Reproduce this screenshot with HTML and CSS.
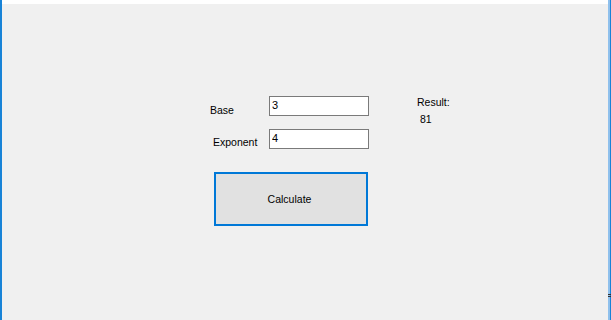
FILE: index.html
```html
<!DOCTYPE html>
<html>
<head>
<meta charset="utf-8">
<link rel="stylesheet" href="styles.css">
<title>Power Calculator</title>
</head>
<body>
<div class="window">
  <div class="topstrip"></div>
  <div class="client">
    <div class="form">
      <div class="fields">
        <label class="lbl lbl-base" for="base">Base</label>
        <input id="base" class="txt" type="text" value="3">
        <label class="lbl lbl-exp" for="exp">Exponent</label>
        <input id="exp" class="txt" type="text" value="4">
      </div>
      <div class="result">
        <div class="result-title">Result:</div>
        <div class="result-value">81</div>
      </div>
    </div>
    <button class="calc" type="button">Calculate</button>
  </div>
  <span class="grip"></span>
</div>
</body>
</html>
```

FILE: styles.css
```css
* { box-sizing: border-box; }
html, body { margin: 0; padding: 0; }
body {
  width: 611px;
  height: 320px;
  overflow: hidden;
  background: #f0f0f0;
  font-family: "Liberation Sans", Arial, sans-serif;
  font-size: 10.5px;
  color: #000;
}
.window {
  width: 611px;
  height: 320px;
  display: flex;
  flex-direction: column;
  border-left: 2px solid #1883d7;
  border-right: 3px solid #1883d7;
  position: relative;
}
.window::after {
  content: "";
  position: absolute;
  top: 0; bottom: 0; right: -2px;
  width: 2px;
  background: #8fc0ec;
}
.topstrip {
  height: 4px;
  background: #ffffff;
}
.client {
  flex: 1;
  background: #f0f0f0;
  padding: 92px 0 0 208px;
}
.form {
  display: flex;
  align-items: flex-start;
}
.fields {
  display: grid;
  grid-template-columns: 59px 100px;
  grid-template-rows: 20px 20px;
  row-gap: 13px;
}
.lbl {
  line-height: 13px;
  white-space: nowrap;
}
.lbl-base { padding-top: 8px; }
.lbl-exp { padding-top: 7px; padding-left: 3px; }
.txt {
  width: 100px;
  height: 20px;
  margin: 0;
  border: 1px solid #7a7a7a;
  background: #fff;
  padding: 0 2px 3px 2px;
  font-family: "Liberation Sans", Arial, sans-serif;
  font-size: 11px;
  color: #000;
  outline: none;
}
.result {
  margin-left: 48px;
  line-height: 13px;
}
.result-value { padding-left: 3px; margin-top: 4px; }
.calc {
  display: block;
  margin: 23px 0 0 4px;
  width: 154px;
  height: 54px;
  border: 2px solid #0078d7;
  background: #e1e1e1;
  font-family: "Liberation Sans", Arial, sans-serif;
  font-size: 10.5px;
  color: #000;
  padding: 0 3px 0 0;
  border-radius: 0;
}
.grip {
  position: absolute;
  z-index: 2;
  right: -3px;
  top: 294px;
  width: 3px;
  height: 3px;
  border-top: 1px solid #333;
  border-bottom: 1px solid #333;
}
```
